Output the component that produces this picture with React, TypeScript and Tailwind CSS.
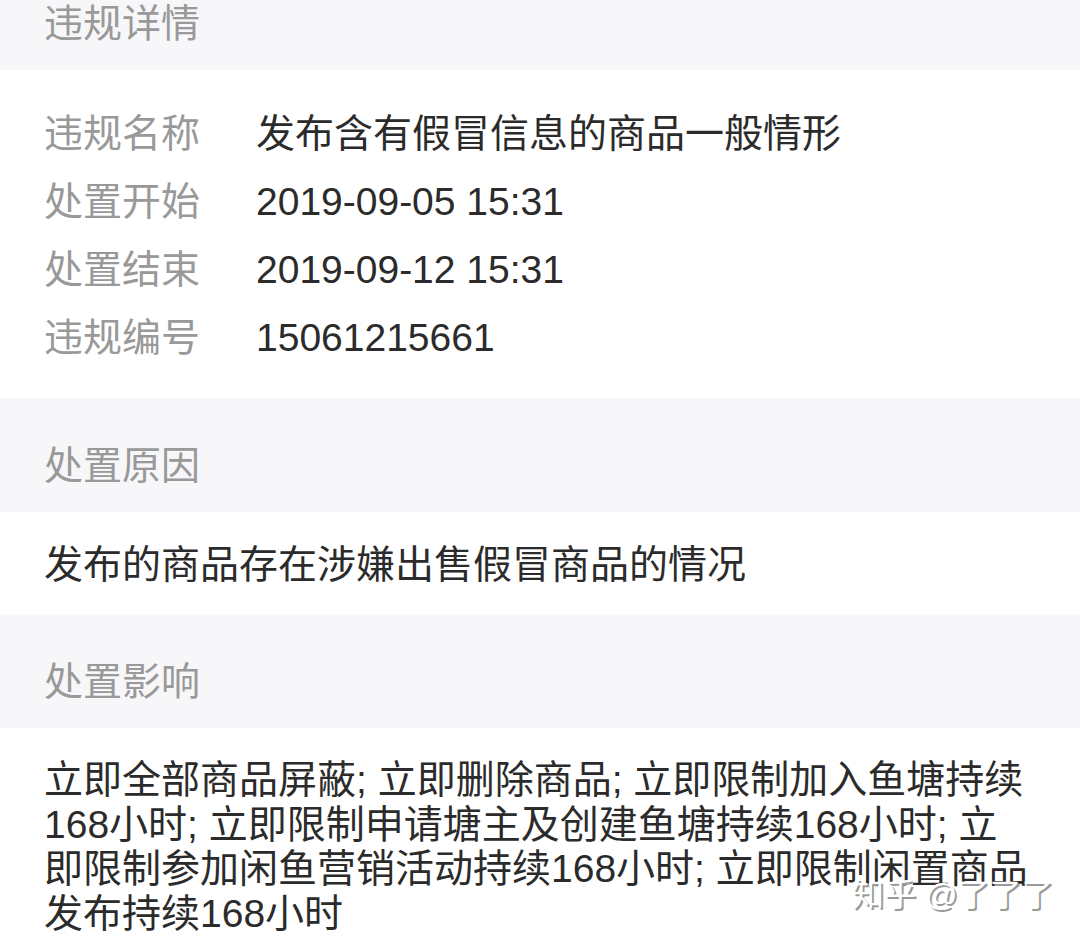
const FONT = "font-['Liberation_Sans','Noto_Sans_CJK_SC',sans-serif]";

const rows = [
  { label: '违规名称', value: '发布含有假冒信息的商品一般情形' },
  { label: '处置开始', value: '2019-09-05 15:31' },
  { label: '处置结束', value: '2019-09-12 15:31' },
  { label: '违规编号', value: '15061215661' },
];

const impact = [
  '立即全部商品屏蔽; 立即删除商品; 立即限制加入鱼塘持续',
  '168小时; 立即限制申请塘主及创建鱼塘持续168小时; 立',
  '即限制参加闲鱼营销活动持续168小时; 立即限制闲置商品',
  '发布持续168小时',
];

const Band = ({ title, h }: { title: string; h: string }) => (
  <div className={`flex ${h} items-end bg-[#f7f7f9] px-[44px] pb-[26px]`}>
    <span className="text-[39px] leading-[40px] text-[#999999]">{title}</span>
  </div>
);

export default function App() {
  return (
    <div className={`relative h-[941px] w-[1080px] overflow-hidden bg-white ${FONT}`}>
      <Band title="违规详情" h="h-[70px]" />

      <div className="px-[44px] pt-[30px] pb-[26px]">
        {rows.map(r => (
          <div key={r.label} className="flex h-[68px] items-center text-[39px] leading-[40px]">
            <span className="w-[212px] shrink-0 text-[#999999]">{r.label}</span>
            <span className="whitespace-nowrap text-[#2b2b2b]">{r.value}</span>
          </div>
        ))}
      </div>

      <Band title="处置原因" h="h-[114px]" />

      <div className="flex h-[103px] items-center px-[44px] pt-[2px] text-[39px] leading-[40px] text-[#2b2b2b]">
        发布的商品存在涉嫌出售假冒商品的情况
      </div>

      <Band title="处置影响" h="h-[113px]" />

      <div className="px-[44px] pt-[30px] text-[39px] leading-[44.5px] text-[#2b2b2b]">
        {impact.map(line => (
          <div key={line} className="whitespace-nowrap">{line}</div>
        ))}
      </div>

      <div className="absolute left-[852px] top-[877px] text-[32px] leading-[36px] text-white [text-shadow:2px_2px_0_#9a9a9a]">
        知乎 @了了了
      </div>
    </div>
  );
}
